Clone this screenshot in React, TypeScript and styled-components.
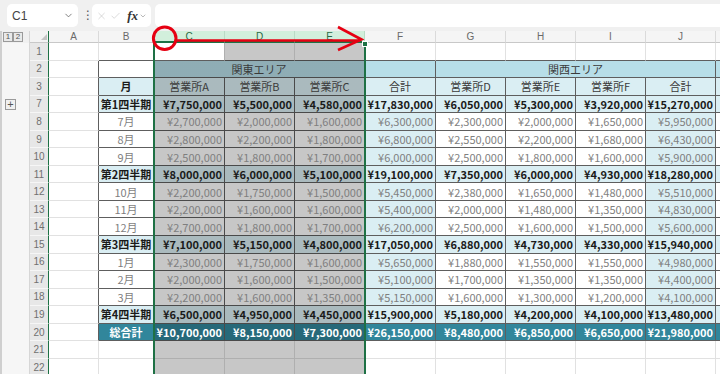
import React from 'react';
import styled, { createGlobalStyle, css } from 'styled-components';
import { X, Check, ChevronDown } from 'lucide-react';

const GREEN = '#1e7145';
const LIGHT = '#daeef3';
const MID = '#b7dee8';
const TEAL = '#31869b';

const GlobalStyle = createGlobalStyle`
  html, body {
    margin: 0;
    padding: 0;
  }
  body {
    font-family: "Noto Sans CJK JP", "Noto Sans", sans-serif;
    background: #f0f0f0;
  }
`;

const Page = styled.div`
  position: relative;
  width: 720px;
  height: 374px;
  overflow: hidden;
  background: #f0f0f0;
`;

const Toolbar = styled.div`
  display: flex;
  align-items: flex-start;
  gap: 4px;
  height: 31px;
  box-sizing: border-box;
  padding: 4px 0 0 7px;
`;

const Box = styled.div<{ $w?: number }>`
  box-sizing: border-box;
  height: 23px;
  width: ${(p) => (p.$w ? `${p.$w}px` : 'auto')};
  flex: ${(p) => (p.$w ? 'none' : '1')};
  background: #fff;
  border-radius: 5px;
  display: flex;
  align-items: center;
  padding: 0 4px;
  gap: 3px;
  color: #9a9a9a;
`;

const NameText = styled.span`
  flex: 1;
  padding-left: 1px;
  font-family: "Liberation Sans", Arial, sans-serif;
  font-size: 12px;
  color: #444;
`;

const Dots = styled.span`
  width: 6px;
  font-family: "DejaVu Sans", sans-serif;
  font-size: 12px;
  line-height: 23px;
  color: #555;
  text-align: center;
`;

const Fx = styled.span`
  font-family: "Liberation Serif", serif;
  font-style: italic;
  font-weight: 700;
  font-size: 13px;
  color: #333;
  margin-left: 3px;
`;

const GRID_COLS = '30px 19px 50px 55px 71px 70px 70px 71px 70px 70px 70px 70px 60px';

const Grid = styled.div`
  display: grid;
  grid-template-columns: ${GRID_COLS};
  grid-template-rows: 12px repeat(19, 17.55px);
  background: #fff;
`;

const OutlineCell = styled.div<{ $head?: boolean }>`
  box-sizing: border-box;
  background: ${(p) => (p.$head ? '#f0f0f0' : '#f6f6f6')};
  border-left: 2px solid #cfcfcf;
  border-right: 1px solid #d6d6d6;
  display: flex;
  align-items: center;
  padding-left: 1px;
`;

const LevelButton = styled.span`
  box-sizing: border-box;
  width: 10px;
  height: 10px;
  border: 1px solid #9a9a9a;
  background: #e9e9e9;
  font-family: "Liberation Sans", Arial, sans-serif;
  font-size: 8px;
  line-height: 8px;
  text-align: center;
  color: #555;
`;

const PlusBox = styled(LevelButton)`
  width: 11px;
  height: 11px;
  margin-left: 2px;
  font-size: 11px;
  line-height: 9px;
  background: #f0f0f0;
`;

const Corner = styled.div`
  position: relative;
  box-sizing: border-box;
  background: #f3f3f3;
  border-bottom: 1px solid #c8c8c8;
  border-right: 1px solid ${GREEN};
  &::after {
    content: '';
    position: absolute;
    right: 1px;
    bottom: 2px;
    border-left: 6px solid transparent;
    border-bottom: 6px solid #c4c4c4;
  }
`;

const ColHead = styled.div<{ $sel?: boolean }>`
  box-sizing: border-box;
  display: flex;
  align-items: center;
  justify-content: center;
  font-family: "Liberation Sans", Arial, sans-serif;
  font-size: 10px;
  color: ${(p) => (p.$sel ? '#2a6a45' : '#6a6a6a')};
  background: ${(p) => (p.$sel ? '#d2efdc' : '#f5f5f5')};
  border-right: 1px solid ${(p) => (p.$sel ? '#b9dcc6' : '#dadada')};
  border-bottom: ${(p) => (p.$sel ? `2px solid ${GREEN}` : '1px solid #c8c8c8')};
`;

const RowHead = styled.div`
  box-sizing: border-box;
  display: flex;
  align-items: center;
  justify-content: center;
  font-family: "Liberation Sans", Arial, sans-serif;
  font-size: 10px;
  color: #707070;
  background: #e7e7e7;
  border-bottom: 1px solid #f6f6f6;
  border-right: 1px solid ${GREEN};
`;

type Tone = 'plain' | 'muted' | 'bold' | 'white';

const toneColor: Record<Tone, string> = {
  plain: '#3a3a3a',
  muted: '#7f7f7f',
  bold: '#1a1a1a',
  white: '#ffffff',
};

const Cell = styled.div<{
  $bg: string;
  $sel: boolean;
  $r: string;
  $b: string;
  $span: number;
  $tone: Tone;
  $align: 'center' | 'right';
}>`
  box-sizing: border-box;
  min-width: 0;
  overflow: hidden;
  white-space: nowrap;
  display: flex;
  align-items: center;
  justify-content: ${(p) => (p.$align === 'right' ? 'flex-end' : 'center')};
  padding: 0 2px 0 2px;
  grid-column: span ${(p) => p.$span};
  font-size: 11px;
  line-height: 16px;
  font-weight: ${(p) => (p.$tone === 'bold' || p.$tone === 'white' ? 700 : 400)};
  color: ${(p) => toneColor[p.$tone]};
  background-color: ${(p) => p.$bg};
  ${(p) =>
    p.$sel &&
    css`
      background-image: linear-gradient(rgba(0, 0, 0, 0.22), rgba(0, 0, 0, 0.22));
    `}
  border-right: 1px solid ${(p) => p.$r};
  border-bottom: 1px solid ${(p) => p.$b};
`;

const SelectionFrame = styled.div`
  position: absolute;
  left: 153px;
  top: 43px;
  width: 213px;
  height: 340px;
  box-sizing: border-box;
  border: 2px solid ${GREEN};
  border-top: none;
  pointer-events: none;
`;

const Handle = styled.div`
  position: absolute;
  right: -4px;
  top: -2px;
  width: 4px;
  height: 4px;
  background: ${GREEN};
  border: 1px solid #fff;
`;

const Annotation = styled.svg`
  position: absolute;
  left: 0;
  top: 0;
  pointer-events: none;
`;

type Spec = {
  col: number;
  span?: number;
  text?: string;
  bg?: string;
  tone?: Tone;
  align?: 'center' | 'right';
};

type Kind = 'q' | 'm' | 't';

const DATA: [number, string, Kind, number[]][] = [
  [7, '第1四半期', 'q', [7750000, 5500000, 4580000, 17830000, 6050000, 5300000, 3920000, 15270000]],
  [8, '7月', 'm', [2700000, 2000000, 1600000, 6300000, 2300000, 2000000, 1650000, 5950000]],
  [9, '8月', 'm', [2800000, 2200000, 1800000, 6800000, 2550000, 2200000, 1680000, 6430000]],
  [10, '9月', 'm', [2500000, 1800000, 1700000, 6000000, 2500000, 1800000, 1600000, 5900000]],
  [11, '第2四半期', 'q', [8000000, 6000000, 5100000, 19100000, 7350000, 6000000, 4930000, 18280000]],
  [12, '10月', 'm', [2200000, 1750000, 1500000, 5450000, 2380000, 1650000, 1480000, 5510000]],
  [13, '11月', 'm', [2200000, 1600000, 1600000, 5400000, 2000000, 1480000, 1350000, 4830000]],
  [14, '12月', 'm', [2700000, 1800000, 1700000, 6200000, 2500000, 1600000, 1500000, 5600000]],
  [15, '第3四半期', 'q', [7100000, 5150000, 4800000, 17050000, 6880000, 4730000, 4330000, 15940000]],
  [16, '1月', 'm', [2300000, 1750000, 1600000, 5650000, 1880000, 1550000, 1550000, 4980000]],
  [17, '2月', 'm', [2000000, 1600000, 1500000, 5100000, 1700000, 1350000, 1350000, 4400000]],
  [18, '3月', 'm', [2200000, 1600000, 1350000, 5150000, 1600000, 1300000, 1200000, 4100000]],
  [19, '第4四半期', 'q', [6500000, 4950000, 4450000, 15900000, 5180000, 4200000, 4100000, 13480000]],
  [20, '総合計', 't', [10700000, 8150000, 7300000, 26150000, 8480000, 6850000, 6650000, 21980000]],
];

// K is only a sliver at the right edge, its letter falls outside the window
const LETTERS = ['A', 'B', 'C', 'D', 'E', 'F', 'G', 'H', 'I', 'J', ''];
const ROWS = [1, 2, 3, 7, 8, 9, 10, 11, 12, 13, 14, 15, 16, 17, 18, 19, 20, 21, 22];
const isSelCol = (c: number) => c >= 2 && c <= 4;
const inTable = (row: number, col: number) => row >= 2 && row <= 20 && col >= 1 && col <= 10;
const yen = (n: number) => '¥' + n.toLocaleString('en-US');

function specsFor(row: number): Spec[] {
  if (row === 2) {
    return [
      { col: 0 },
      { col: 1, bg: '#fff' },
      { col: 2, span: 3, text: '関東エリア', bg: MID, tone: 'plain' },
      { col: 5, bg: MID },
      { col: 6, span: 4, text: '関西エリア', bg: MID, tone: 'plain' },
      { col: 10, bg: MID },
    ];
  }
  if (row === 3) {
    const heads = ['月', '営業所A', '営業所B', '営業所C', '合計', '営業所D', '営業所E', '営業所F', '合計', ''];
    return [
      { col: 0 },
      ...heads.map((t, i) => ({ col: i + 1, text: t, bg: LIGHT, tone: (i === 0 ? 'bold' : 'plain') as Tone })),
    ];
  }
  const d = DATA.find((r) => r[0] === row);
  if (!d) {
    return LETTERS.map((_, i) => ({ col: i }));
  }
  const [, label, kind, nums] = d;
  const bgFor = (col: number) => {
    if (kind === 't') return TEAL;
    if (kind === 'q') return LIGHT;
    return col === 5 || col === 9 ? LIGHT : '#fff';
  };
  const tone: Tone = kind === 't' ? 'white' : kind === 'q' ? 'bold' : 'muted';
  return [
    { col: 0 },
    { col: 1, text: label, bg: bgFor(1), tone },
    ...nums.map((n, i) => ({ col: i + 2, text: yen(n), bg: bgFor(i + 2), tone, align: 'right' as const })),
    { col: 10, bg: bgFor(6) },
  ];
}

function SheetRow({ row, next }: { row: number; next: number }) {
  const specs = specsFor(row);
  return (
    <>
      <OutlineCell>{row === 7 && <PlusBox>+</PlusBox>}</OutlineCell>
      <RowHead>{row}</RowHead>
      {specs.map((s) => {
        const span = s.span || 1;
        const last = s.col + span - 1;
        const sel = isSelCol(s.col) && isSelCol(last) && !(row === 1 && s.col === 2);
        const selR = isSelCol(last);
        const darkR = inTable(row, last) || inTable(row, last + 1);
        const darkB = inTable(row, s.col) || inTable(next, s.col);
        const r = darkR ? (selR ? '#4a4a4a' : '#5e5e5e') : selR ? '#afafaf' : '#e1e1e1';
        const b = darkB ? (sel ? '#4a4a4a' : '#5e5e5e') : sel ? '#afafaf' : '#e1e1e1';
        return (
          <Cell
            key={s.col}
            $bg={s.bg || '#fff'}
            $sel={sel}
            $r={r}
            $b={b}
            $span={span}
            $tone={s.tone || 'plain'}
            $align={s.align || 'center'}
          >
            {s.text}
          </Cell>
        );
      })}
    </>
  );
}

export default function App() {
  return (
    <>
      <GlobalStyle />
      <Page>
        <Toolbar>
          <Box $w={71}>
            <NameText>C1</NameText>
            <ChevronDown size={11} color="#555" strokeWidth={1.6} />
          </Box>
          <Dots>⋮</Dots>
          <Box $w={59}>
            <X size={14} strokeWidth={1.1} color="#b8b8b8" />
            <Check size={14} strokeWidth={1.1} color="#b8b8b8" />
            <Fx>fx</Fx>
            <ChevronDown size={10} color="#777" strokeWidth={1.6} style={{ marginLeft: -2 }} />
          </Box>
          <Box style={{ borderRadius: '5px 0 0 5px' }} />
        </Toolbar>
        <Grid>
          <OutlineCell $head>
            <LevelButton>1</LevelButton>
            <LevelButton>2</LevelButton>
          </OutlineCell>
          <Corner />
          {LETTERS.map((l, i) => (
            <ColHead key={i} $sel={isSelCol(i)}>
              {l}
            </ColHead>
          ))}
          {ROWS.map((row, i) => (
            <SheetRow key={row} row={row} next={ROWS[i + 1] ?? 99} />
          ))}
        </Grid>
        <SelectionFrame>
          <Handle />
        </SelectionFrame>
        <Annotation width="720" height="374" viewBox="0 0 720 374">
          <circle cx="164.7" cy="38.3" r="11.3" fill="none" stroke="#e60012" strokeWidth="3" />
          <line x1="176" y1="40.5" x2="360" y2="40.5" stroke="#e60012" strokeWidth="2.6" />
          <polyline
            points="338,27 361.5,39.5 338,50"
            fill="none"
            stroke="#e60012"
            strokeWidth="2.6"
            strokeLinejoin="miter"
          />
        </Annotation>
      </Page>
    </>
  );
}
